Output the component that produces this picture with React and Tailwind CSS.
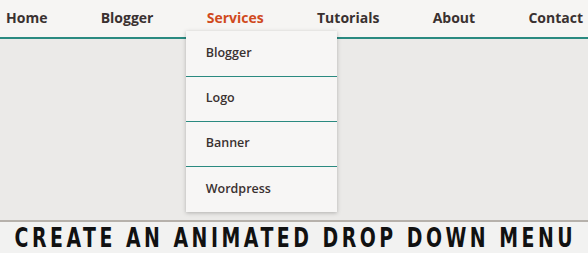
import React from "react";

const items = ["Home", "Blogger", "Services", "Tutorials", "About", "Contact"];
const sub = ["Blogger", "Logo", "Banner", "Wordpress"];

export default function App() {
  return (
    <div className="w-[588px] h-[253px] flex flex-col bg-[#ebeae8] overflow-hidden" style={{ fontFamily: "'Open Sans', sans-serif" }}>
      <nav className="relative z-10 h-[39px] shrink-0 bg-[#f6f5f3] border-b-2 border-[#2a8a80] flex items-center justify-between pl-[6px] pr-[5px] pb-[4px]">
        {items.map((t) => (
          <div key={t} className="relative">
            <span className={`text-[14px] font-bold ${t === "Services" ? "text-[#d04a1d]" : "text-[#3a3130]"}`}>{t}</span>
            {t === "Services" && (
              <div className="absolute left-[-21px] top-[26px] w-[151px] bg-[#f7f6f5] shadow-[0_1px_4px_rgba(0,0,0,0.25)] flex flex-col">
                {sub.map((s, i) => (
                  <div
                    key={s}
                    className={`${i === 0 ? "h-[46px] pt-[1px]" : "h-[45px]"} flex items-center pl-[20px] text-[12.5px] font-semibold text-[#3a3130] ${i < sub.length - 1 ? "border-b border-[#2a8a80]" : ""}`}
                  >
                    {s}
                  </div>
                ))}
              </div>
            )}
          </div>
        ))}
      </nav>
      <div className="flex-1" />
      <div className="h-[33px] shrink-0 border-t-2 border-[#b6b1ab] bg-[#f2f2f1] flex items-center justify-center">
        <span
          className="whitespace-nowrap text-[27px] font-bold text-[#111] tracking-[5px] leading-none pl-[5px] scale-x-[0.7]"
          style={{ fontFamily: "'DejaVu Sans', sans-serif" }}
        >
          CREATE AN ANIMATED DROP DOWN MENU
        </span>
      </div>
    </div>
  );
}
